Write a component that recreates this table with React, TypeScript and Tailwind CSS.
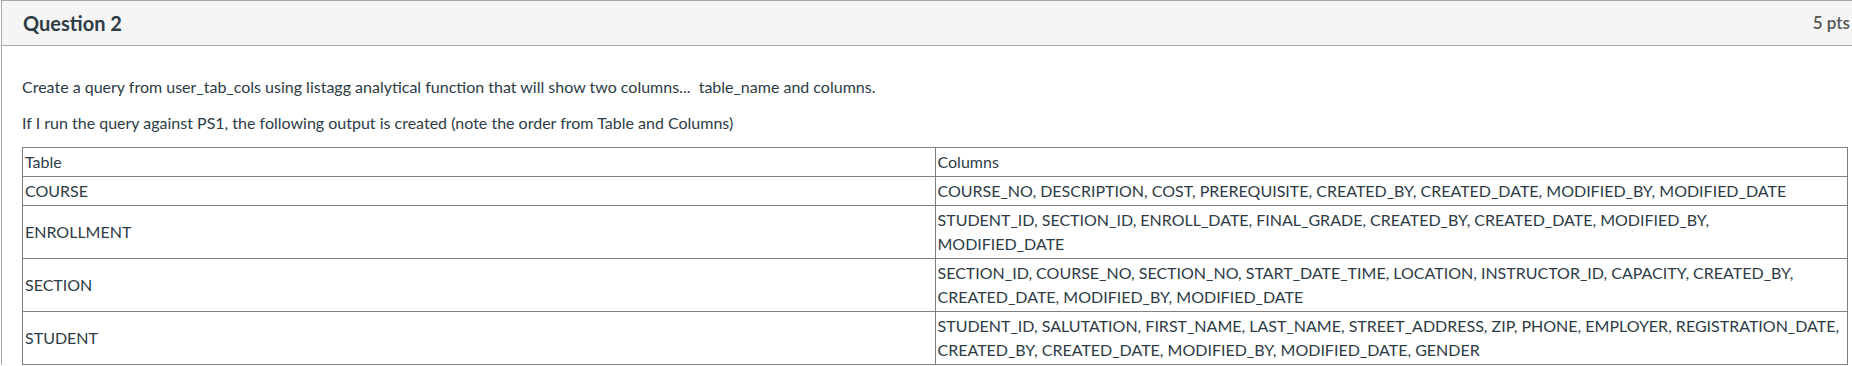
import { Fragment } from "react";

const rows: [string, string[]][] = [
  ["Table", ["Columns"]],
  [
    "COURSE",
    [
      "COURSE_NO, DESCRIPTION, COST, PREREQUISITE, CREATED_BY, CREATED_DATE, MODIFIED_BY, MODIFIED_DATE",
    ],
  ],
  [
    "ENROLLMENT",
    [
      "STUDENT_ID, SECTION_ID, ENROLL_DATE, FINAL_GRADE, CREATED_BY, CREATED_DATE, MODIFIED_BY,",
      "MODIFIED_DATE",
    ],
  ],
  [
    "SECTION",
    [
      "SECTION_ID, COURSE_NO, SECTION_NO, START_DATE_TIME, LOCATION, INSTRUCTOR_ID, CAPACITY, CREATED_BY,",
      "CREATED_DATE, MODIFIED_BY, MODIFIED_DATE",
    ],
  ],
  [
    "STUDENT",
    [
      "STUDENT_ID, SALUTATION, FIRST_NAME, LAST_NAME, STREET_ADDRESS, ZIP, PHONE, EMPLOYER, REGISTRATION_DATE,",
      "CREATED_BY, CREATED_DATE, MODIFIED_BY, MODIFIED_DATE, GENDER",
    ],
  ],
];

export default function App() {
  return (
    <div className="w-[1852px] h-[366px] overflow-hidden bg-white font-['Lato','Liberation_Sans',sans-serif] text-[#2d3b45]">
      <div className="ml-px w-[1860px] border-l border-t border-[#a9a9a9]">
        <div className="h-[45px] flex items-center justify-between pl-[21px] pr-[11px] bg-[#f5f5f5] border-b border-[#a9a9a9]">
          <span className="text-[20px] font-bold">Question 2</span>
          <span className="text-[17px] font-semibold text-[#555]">5 pts</span>
        </div>

        <div className="pl-[20px] pt-[29px]">
          <p className="text-[16px] leading-[24px]">
            Create a query from user_tab_cols using listagg analytical function
            that will show two columns...&nbsp; table_name and columns.
          </p>
          <p className="mt-[12px] text-[16px] leading-[24px]">
            If I run the query against PS1, the following output is created
            (note the order from Table and Columns)
          </p>

          <table className="mt-[12px] w-[1826px] border-collapse border border-[#7f7f7f] text-[16px] leading-[24px] table-fixed">
            <tbody>
              {rows.map(([name, lines]) => (
                <tr key={name}>
                  <td className="w-1/2 border border-[#7f7f7f] p-[2px] align-middle">
                    {name}
                  </td>
                  <td className="w-1/2 border border-[#7f7f7f] p-[2px] align-middle">
                    {lines.map((l, i) => (
                      <Fragment key={i}>
                        {i > 0 && <br />}
                        {l}
                      </Fragment>
                    ))}
                  </td>
                </tr>
              ))}
            </tbody>
          </table>
        </div>
      </div>
    </div>
  );
}
